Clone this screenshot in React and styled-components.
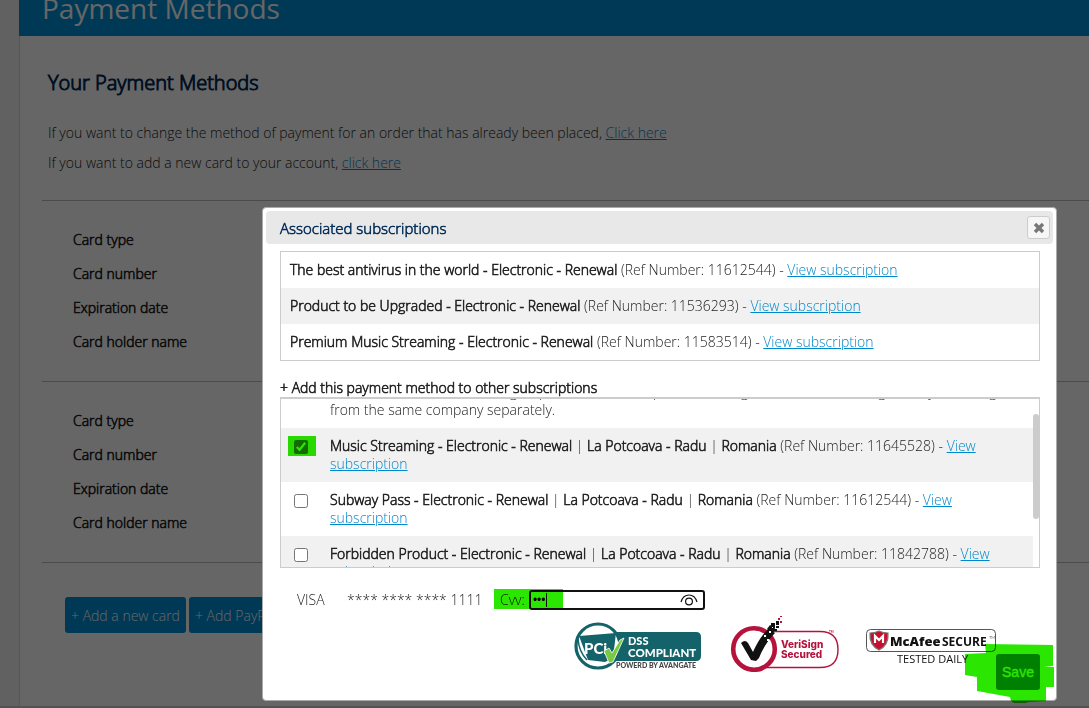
import React, { useLayoutEffect, useRef } from 'react'
import styled, { createGlobalStyle } from 'styled-components'

const GlobalStyle = createGlobalStyle`
    * {
        box-sizing: border-box;
    }
    body {
        margin: 0;
        background: #f3f3f3;
        color: #222;
        font-family: 'Open Sans', sans-serif;
        font-size: 14px;
        font-weight: 300;
        line-height: 18px;
        overflow: hidden;
    }
    a {
        color: #0088cc;
        text-decoration: underline;
    }
`

const Page = styled.div`
    margin-left: 19px;
    min-height: calc(100vh - 2px);
    background: #fff;
    border-left: 1px solid #d8d8d8;
`

const PageHeader = styled.header`
    margin-left: -1px;
    padding: 0 23px 20px;
    background: #008ed5;
    h1 {
        margin: 0;
        color: #fff;
        font-size: 28px;
        font-weight: 400;
        line-height: 16px;
    }
`

const Intro = styled.section`
    padding: 35px 28px 19px;
    h2 {
        margin: 0 0 26px;
        color: #002b55;
        font-size: 20px;
        font-weight: 300;
        line-height: 24px;
        -webkit-text-stroke: 1px;
    }
    p {
        margin: 0 0 6px;
        line-height: 24px;
    }
`

const CardGroup = styled.ul`
    margin: 0 0 0 22px;
    padding: 22px 31px;
    height: 181px;
    list-style: none;
    border-top: 1px solid #bbb;
    -webkit-text-stroke: 0.6px;
    li {
        line-height: 34px;
    }
`

const PageActions = styled.div`
    display: flex;
    gap: 3px;
    margin-left: 22px;
    padding: 34px 23px;
    border-top: 1px solid #bbb;
`

const PageFoot = styled.footer`
    height: 2px;
    background: #ccc;
`

const Button = styled.button`
    height: 36px;
    padding: 0 6px;
    border: 0;
    border-radius: 3px;
    background: #008ed5;
    color: #fff;
    font-family: inherit;
    font-size: 14px;
    font-weight: 300;
`

const Overlay = styled.div`
    position: fixed;
    inset: 0;
    display: flex;
    align-items: flex-start;
    padding: 207px 32px 0 262px;
    background: rgba(0, 0, 0, 0.6);
`

const Dialog = styled.div`
    position: relative;
    flex: 1;
    padding: 3px;
    border: 1px solid #aaa;
    border-radius: 4px;
    background: #fff;
    color: #222;
`

const TitleBar = styled.div`
    display: flex;
    align-items: center;
    justify-content: space-between;
    height: 33px;
    padding: 0 3px 0 14px;
    border-radius: 4px;
    background: #e8e8e8;
    h3 {
        margin: 0;
        color: #002b55;
        font-size: 15px;
        font-weight: 300;
        -webkit-text-stroke: 0.6px;
    }
`

const CloseButton = styled.button`
    display: grid;
    place-items: center;
    width: 23px;
    height: 23px;
    padding: 0;
    border: 1px solid #ccc;
    border-radius: 3px;
    background: #f6f6f6;
`

const DialogBody = styled.div`
    padding: 7px 13px 0 14px;
    h4 {
        margin: 0;
        padding: 18px 0 0;
        font-size: 14px;
        font-weight: 300;
        line-height: 18px;
        -webkit-text-stroke: 0.6px;
    }
`

const SubscriptionList = styled.ul`
    margin: 0;
    padding: 0;
    list-style: none;
    border: 1px solid #ccc;
    strong {
        font-weight: 300;
        -webkit-text-stroke: 0.6px;
    }
`

const ScrollFrame = styled.div`
    position: relative;
    border: 1px solid #ccc;
    border-top-width: 2px;
`

const ScrollList = styled(SubscriptionList)`
    height: 168px;
    padding: 0 6px 54px 0;
    border: 0;
    overflow-y: scroll;
    scrollbar-width: none;
`

const ScrollThumb = styled.span`
    position: absolute;
    top: 15px;
    right: 0;
    width: 6px;
    height: 105px;
    border-radius: 3px;
    background: #ccc;
`

const SubscriptionRow = styled.li`
    display: flex;
    padding: 9px;
    background: ${({ $shaded }) => ($shaded ? '#f1f1f1' : '#fff')};
`

const Marked = styled.span`
    position: relative;
    &::after {
        content: '';
        position: absolute;
        inset: ${({ $inset }) => $inset};
        background: ${({ $on = true }) => ($on ? '#2ae600' : 'none')};
        mix-blend-mode: multiply;
        pointer-events: none;
    }
`

const CheckCell = styled(Marked)`
    flex: none;
    width: 40px;
    padding: 3px 0 0 4px;
    input {
        display: block;
        width: 14px;
        height: 14px;
        margin: 0;
        accent-color: #767676;
    }
`

const CardLine = styled.div`
    display: flex;
    align-items: center;
    height: 20px;
    margin: 22px 0 0 17px;
`

const Brand = styled.span`
    width: 50px;
`

const CardDigits = styled.span`
    width: 147px;
`

const CvvField = styled(Marked)`
    display: flex;
    align-items: center;
    gap: 4px;
    padding-left: 6px;
`

const CvvBox = styled.span`
    position: relative;
    display: flex;
    align-items: center;
    width: 176px;
    height: 20px;
    padding: 0 5px 0 2px;
    border: 2px solid #101010;
    border-radius: 3px;
    input {
        flex: 1;
        min-width: 0;
        padding: 0;
        border: 0;
        outline: 0;
        background: none;
        font-family: 'Liberation Sans', sans-serif;
        font-size: 12px;
    }
`

const Caret = styled.span`
    position: absolute;
    left: 15px;
    top: 1px;
    width: 1px;
    height: 14px;
    background: #111;
`

const Seals = styled.div`
    display: flex;
    align-items: flex-start;
    gap: 24px;
    height: 87px;
    padding: 6px 0 0 293px;
    svg {
        flex: none;
    }
`

const SaveArea = styled.div`
    position: absolute;
    right: 0;
    bottom: -4px;
    padding: 10px 16px 14px 32px;
`

const SaveButton = styled(Button)`
    display: block;
    width: 44px;
    padding: 0;
    font-family: 'Liberation Sans', sans-serif;
    font-weight: 400;
    -webkit-text-stroke: 0.4px;
`

const Scribble = styled.svg`
    position: absolute;
    inset: 0;
    mix-blend-mode: multiply;
    pointer-events: none;
`

const cardFields = ['Card type', 'Card number', 'Expiration date', 'Card holder name']

const current = [
    { name: 'The best antivirus in the world - Electronic - Renewal', ref: '11612544' },
    { name: 'Product to be Upgraded - Electronic - Renewal', ref: '11536293' },
    { name: 'Premium Music Streaming - Electronic - Renewal', ref: '11583514' },
]

const others = [
    { name: 'Music Streaming', ref: '11645528', checked: true },
    { name: 'Subway Pass', ref: '11612544' },
    { name: 'Forbidden Product', ref: '11842788' },
]

function EyeIcon() {
    return (
        <svg width="18" height="14" viewBox="0 0 18 14" fill="none" stroke="#111" strokeWidth="1.2">
            <path d="M1 9Q3 2 9 2t8 7" />
            <circle cx="9" cy="8.5" r="3.4" />
        </svg>
    )
}

function PciSeal() {
    return (
        <svg width="130" height="56" viewBox="0 -4 130 56" role="img" aria-label="PCI DSS compliant">
            <path d="M40 12h83q5 0 5 5v19q0 5-5 5H40z" fill="#14636a" />
            <circle cx="25" cy="26" r="22" fill="#fff" stroke="#14636a" strokeWidth="3.2" />
            <path d="M6 16l37-3-3 25-8 4-17-2z" fill="#14636a" />
            <path d="M5 19q1 13 9 21" fill="none" stroke="#14636a" strokeWidth="1.5" />
            <g fill="#fff" fontFamily="Lato, sans-serif" fontWeight="900">
                <text x="11" y="34" fontSize="15">PCi</text>
                <text x="55" y="25" fontSize="11">DSS</text>
                <text x="55" y="37" fontSize="11.5">COMPLIANT</text>
            </g>
            <path d="M31 31l5-3 3 5 8-13 4-2-11 24-4 1z" fill="#7ac943" stroke="#fff" strokeWidth="0.8" />
            <text x="43" y="48" fontFamily="Lato, sans-serif" fontWeight="900" fontSize="7" fill="#444">POWERD BY AVANGATE</text>
        </svg>
    )
}

function VeriSignSeal() {
    return (
        <svg width="114" height="56" viewBox="0 1 114 56" role="img" aria-label="VeriSign Secured">
            <path d="M34 16.5h59q18 0 18 18t-18 18H34" fill="#fff" stroke="#b5123c" strokeWidth="1.4" />
            <circle cx="27" cy="34" r="20.8" fill="#fff" stroke="#b5123c" strokeWidth="4.6" />
            <path d="M14 28q4-4 7 0l5 9q6-14 15-23l7 4q-10 10-16 25l-3 3-5-1z" fill="#111" />
            <g fill="#111">
                <path d="M40 14l3-4 5 3-2 6zM44 8h4v5h-4zM49 11h3v2h-3zM47 14h3v2h-3zM49 6h3v4h-3z" />
                <path d="M51 3h2v2h-2zM53 6h2v2h-2zM53 1h2v1h-2z" fill="#b5123c" />
            </g>
            <path d="M37 20h2v2h-2zM42 16h2v2h-2zM40 24h2v2h-2zM45 12h1v1h-1z" fill="#fff" />
            <g fill="#b5123c" fontFamily="Inter, sans-serif" fontWeight="800" fontSize="10">
                <text x="54" y="33">VeriSign</text>
                <text x="54" y="43">Secured</text>
            </g>
            <text x="102" y="18" fontFamily="Lato, sans-serif" fontWeight="700" fontSize="3" fill="#b5123c">TM</text>
        </svg>
    )
}

function McAfeeSeal() {
    return (
        <svg width="133" height="56" viewBox="0 -11 133 56" role="img" aria-label="McAfee SECURE tested daily">
            <rect x="1.5" y="2.5" width="129" height="22" rx="4" fill="#fff" stroke="#555" />
            <path d="M5 6q5 0 9-2 4 2 9 2 1 12-9 17Q4 18 5 6z" fill="#c8102e" stroke="#777" strokeWidth="1.2" />
            <path d="M10 16V9l4 4 4-4v7" fill="none" stroke="#fff" strokeWidth="2.2" />
            <g fontFamily="'Open Sans', sans-serif" fill="#111">
                <text x="25" y="19" fontSize="13" fontWeight="800">McAfee</text>
                <text x="77" y="19" fontSize="12" fontWeight="700">SECURE</text>
                <text x="32" y="36" fontSize="11" fontWeight="500">TESTED DAILY</text>
            </g>
            <text x="124" y="12" fontFamily="Lato, sans-serif" fontSize="4">TM</text>
        </svg>
    )
}

function App() {
    const listRef = useRef(null)

    useLayoutEffect(() => {
        listRef.current.scrollTop = 25
    }, [])

    return (
        <>
            <GlobalStyle />
            <Page>
                <PageHeader>
                    <h1>Payment Methods</h1>
                </PageHeader>
                <Intro>
                    <h2>Your Payment Methods</h2>
                    <p>If you want to change the method of payment for an order that has already been placed, <a href="#change">Click here</a></p>
                    <p>If you want to add a new card to your account, <a href="#add">click here</a></p>
                </Intro>
                {[1, 2].map((card) => (
                    <CardGroup key={card}>
                        {cardFields.map((field) => <li key={field}>{field}</li>)}
                    </CardGroup>
                ))}
                <PageActions>
                    <Button>+ Add a new card</Button>
                    <Button>+ Add PayPal</Button>
                </PageActions>
            </Page>
            <PageFoot />
            <Overlay>
                <Dialog role="dialog" aria-labelledby="dialog-title">
                    <TitleBar>
                        <h3 id="dialog-title">Associated subscriptions</h3>
                        <CloseButton aria-label="Close">
                            <svg width="12" height="12" viewBox="0 0 12 12">
                                <path d="M2 2l8 8M10 2l-8 8" stroke="#777" strokeWidth="3.4" />
                            </svg>
                        </CloseButton>
                    </TitleBar>
                    <DialogBody>
                        <SubscriptionList>
                            {current.map((item, i) => (
                                <SubscriptionRow key={item.ref} $shaded={i % 2 === 1}>
                                    <span>
                                        <strong>{item.name}</strong> (Ref Number: {item.ref}) - <a href="#view">View subscription</a>
                                    </span>
                                </SubscriptionRow>
                            ))}
                        </SubscriptionList>
                        <h4>+ Add this payment method to other subscriptions</h4>
                        <ScrollFrame>
                            <ScrollList ref={listRef}>
                                <SubscriptionRow>
                                    <CheckCell $on={false} />
                                    <span>
                                        You can add this card to the group and then all the plans renewing with the same date, generally renewing
                                        <br />
                                        from the same company separately.
                                    </span>
                                </SubscriptionRow>
                                {others.map((item, i) => (
                                    <SubscriptionRow key={item.ref} $shaded={i % 2 === 0}>
                                        <CheckCell $on={Boolean(item.checked)} $inset="-1px 14px 17px -2px">
                                            <input type="checkbox" aria-label={item.name} defaultChecked={item.checked} />
                                        </CheckCell>
                                        <span>
                                            <strong>{item.name} - Electronic - Renewal</strong> | <strong>La Potcoava - Radu</strong> | <strong>Romania</strong>{' '}
                                            (Ref Number: {item.ref}) - <a href="#view">View subscription</a>
                                        </span>
                                    </SubscriptionRow>
                                ))}
                            </ScrollList>
                            <ScrollThumb />
                        </ScrollFrame>
                        <CardLine>
                            <Brand>VISA</Brand>
                            <CardDigits>**** **** **** 1111</CardDigits>
                            <CvvField $inset="-1px 142px 1px 0">
                                <label htmlFor="cvv">Cvv:</label>
                                <CvvBox>
                                    <input id="cvv" type="password" defaultValue="123" />
                                    <Caret />
                                    <EyeIcon />
                                </CvvBox>
                            </CvvField>
                        </CardLine>
                        <Seals>
                            <PciSeal />
                            <VeriSignSeal />
                            <McAfeeSeal />
                        </Seals>
                    </DialogBody>
                    <SaveArea>
                        <SaveButton>Save</SaveButton>
                        <Scribble width="92" height="60" viewBox="0 0 92 60">
                            <path d="M21 0l68 1v21l-9 1 10 0v20h-8v14l-18 1-2 1h-12l-3-2-1-4-33-6V33l-12-2V10l21-1z" fill="#2ae600" />
                        </Scribble>
                    </SaveArea>
                </Dialog>
            </Overlay>
        </>
    )
}

export default App
